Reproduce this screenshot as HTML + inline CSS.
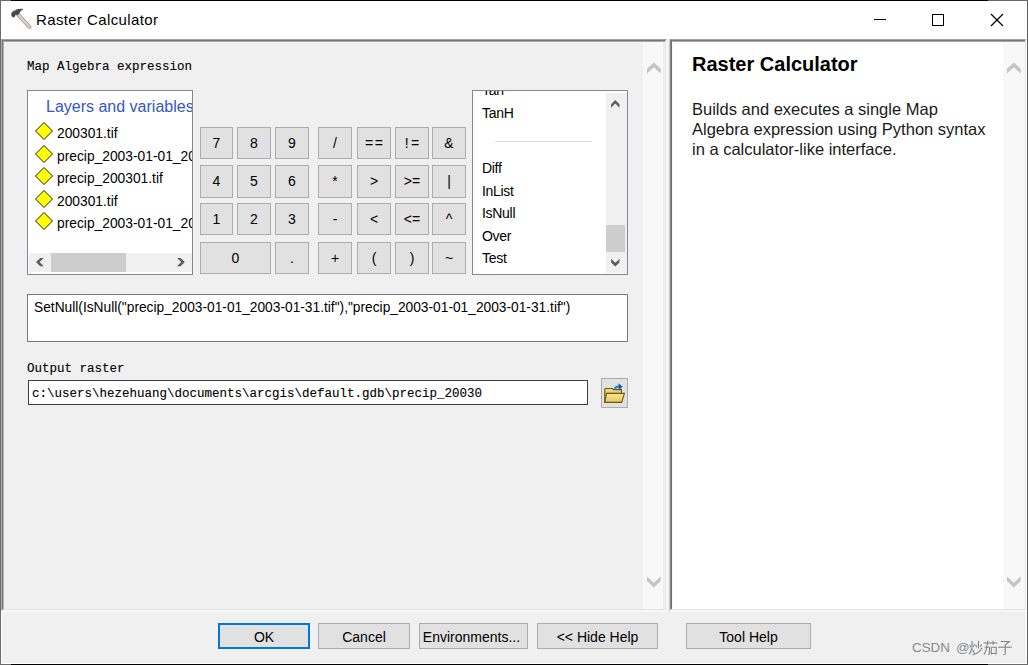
<!DOCTYPE html>
<html><head><meta charset="utf-8">
<style>
*{box-sizing:border-box;margin:0;padding:0}
html,body{width:1028px;height:665px;overflow:hidden;background:#f0f0f0;position:relative;font-family:"Liberation Sans",sans-serif}
.a{position:absolute}
.t{position:absolute;white-space:pre;line-height:1}
.btn{position:absolute;background:#e1e1e1;border:1px solid #adadad}
.cb{position:absolute;background:#e1e1e1;border:1px solid #adadad;font-size:14px;color:#000;text-align:center;line-height:30px}
.mono{font-family:"Liberation Mono",monospace;-webkit-text-stroke:0.12px #000}
.li{position:absolute;left:0;font-size:13.5px;color:#000;white-space:pre;line-height:16px}
</style></head><body>
<!-- window frame -->
<div class="a" style="left:0;top:0;width:1px;height:665px;background:#6b6b6b"></div>
<div class="a" style="left:1027px;top:0;width:1px;height:665px;background:#5e5e5e"></div>
<div class="a" style="left:0;top:0;width:1028px;height:1px;background:#6b6b6b"></div>
<div class="a" style="left:11px;top:0;width:977px;height:1px;background:#000"></div>
<div class="a" style="left:0;top:664px;width:1028px;height:1px;background:#6b6b6b"></div>
<div class="a" style="left:11px;top:664px;width:977px;height:1px;background:#000"></div>
<!-- title bar -->
<div class="a" style="left:1px;top:1px;width:1026px;height:38px;background:#fff"></div>
<svg class="a" style="left:0;top:0" width="40" height="36" viewBox="0 0 40 36">
  <path d="M18.6 12.8 L30.6 25.8 Q31.6 27.4 30.5 28.3 Q29.4 29 28.3 28 L16.4 15 Z" fill="#d6cfbc" stroke="#958d7c" stroke-width="0.85"/>
  <path d="M11.2 14.2 Q11.2 12.2 13 11 L16.5 9.4 Q19.5 8.6 23.6 9 Q21.5 10 20.2 11.6 L19.6 13.2 L17.4 15.2 L15.8 14.4 Q15 16.2 14 17.4 Q11.6 17.6 11.2 14.2 Z" fill="#474747"/>
  <path d="M12.5 12.4 Q14 10.8 16.5 10" stroke="#9a9a9a" stroke-width="0.8" fill="none"/>
</svg>
<div class="t" style="left:36px;top:12px;font-size:15px;letter-spacing:0.38px;color:#000">Raster Calculator</div>
<!-- window controls -->
<div class="a" style="left:874px;top:19px;width:12px;height:1px;background:#000"></div>
<div class="a" style="left:932px;top:14px;width:12px;height:12px;border:1px solid #000"></div>
<svg class="a" style="left:990px;top:13px" width="14" height="14" viewBox="0 0 14 14"><path d="M1 1 L13 13 M13 1 L1 13" stroke="#000" stroke-width="1.2"/></svg>

<!-- left panel -->
<div class="a" style="left:1px;top:39px;width:666px;height:573px;background:#f0f0f0;border-top:1px solid #a0a0a0;border-left:1px solid #ababab;border-right:1px solid #fff;border-bottom:2px solid #f7f7f7"></div>
<div class="a" style="left:2px;top:40px;width:664px;height:570px;border-top:1px solid #777;border-left:1px solid #787878;border-right:1px solid #e3e3e3;border-bottom:1px solid #e3e3e3"></div>
<div class="a" style="left:3px;top:41px;width:662px;height:568px;border-top:1px solid #a8a8a8;border-left:1px solid #b0b0b0"></div>
<div class="a" style="left:4px;top:42px;width:660px;height:567px;border-top:1px solid #f4f4f4;border-left:1px solid #f5f5f5"></div>
<div class="a" style="left:643px;top:42px;width:21px;height:567px;background:#f8f8f8;border-right:1px solid #ededed"></div>
<svg class="a" style="left:644px;top:58px" width="20" height="20" viewBox="0 0 20 20"><path d="M3 10.8 L9.9 4.5 L16.7 10.8 L16.7 15.4 L9.9 9.3 L3 15.4 Z" fill="#c4c4c4"/></svg>
<svg class="a" style="left:644px;top:570px" width="20" height="20" viewBox="0 0 20 20"><path d="M3 6.6 L9.9 12.7 L16.7 6.6 L16.7 11.1 L9.9 17.4 L3 11.1 Z" fill="#c4c4c4"/></svg>

<!-- right panel -->
<div class="a" style="left:669px;top:39px;width:358px;height:573px;background:#fff;border-top:1px solid #fff;border-left:1px solid #c8c8c8;border-right:1px solid #fff;border-bottom:2px solid #f7f7f7"></div>
<div class="a" style="left:670px;top:39px;width:356px;height:571px;border-top:1px solid #a0a0a0;border-left:1px solid #8a8a8a;border-right:1px solid #e3e3e3;border-bottom:1px solid #e3e3e3"></div>
<div class="a" style="left:671px;top:40px;width:354px;height:569px;border-top:1px solid #777;border-left:1px solid #696969"></div>
<div class="a" style="left:672px;top:41px;width:353px;height:568px;border-top:1px solid #a8a8a8;border-left:1px solid #f5f5f5"></div>
<div class="a" style="left:1003px;top:42px;width:22px;height:567px;background:#f8f8f8"></div>
<svg class="a" style="left:1004px;top:58px" width="20" height="20" viewBox="0 0 20 20"><path d="M3 10.8 L9.9 4.5 L16.7 10.8 L16.7 15.4 L9.9 9.3 L3 15.4 Z" fill="#c4c4c4"/></svg>
<svg class="a" style="left:1004px;top:570px" width="20" height="20" viewBox="0 0 20 20"><path d="M3 6.6 L9.9 12.7 L16.7 6.6 L16.7 11.1 L9.9 17.4 L3 11.1 Z" fill="#c4c4c4"/></svg>


<!-- LEFT CONTENT -->
<div class="t mono" style="left:27px;top:61px;font-size:12.5px;color:#000">Map Algebra expression</div>
<!-- layers listbox -->
<div class="a" style="left:27px;top:90px;width:166px;height:185px;background:#fff;border:1px solid #828790;overflow:hidden">
  <div class="t" style="left:18px;top:8px;font-size:16px;color:#3556c8">Layers and variables</div>
  <svg class="a" style="left:6px;top:30px" width="20" height="20" viewBox="0 0 20 20"><path d="M10 1.5 L18.5 10 L10 18.5 L1.5 10 Z" fill="#ffff00" stroke="#202020" stroke-width="1"/></svg>
  <div class="t" style="left:29px;top:36px;font-size:13.8px;color:#000">200301.tif</div>
  <svg class="a" style="left:6px;top:53px" width="20" height="20" viewBox="0 0 20 20"><path d="M10 1.5 L18.5 10 L10 18.5 L1.5 10 Z" fill="#ffff00" stroke="#202020" stroke-width="1"/></svg>
  <div class="t" style="left:29px;top:59px;font-size:13.8px;color:#000">precip_2003-01-01_2003-01-31.tif</div>
  <svg class="a" style="left:6px;top:75px" width="20" height="20" viewBox="0 0 20 20"><path d="M10 1.5 L18.5 10 L10 18.5 L1.5 10 Z" fill="#ffff00" stroke="#202020" stroke-width="1"/></svg>
  <div class="t" style="left:29px;top:81px;font-size:13.8px;color:#000">precip_200301.tif</div>
  <svg class="a" style="left:6px;top:98px" width="20" height="20" viewBox="0 0 20 20"><path d="M10 1.5 L18.5 10 L10 18.5 L1.5 10 Z" fill="#ffff00" stroke="#202020" stroke-width="1"/></svg>
  <div class="t" style="left:29px;top:104px;font-size:13.8px;color:#000">200301.tif</div>
  <svg class="a" style="left:6px;top:120px" width="20" height="20" viewBox="0 0 20 20"><path d="M10 1.5 L18.5 10 L10 18.5 L1.5 10 Z" fill="#ffff00" stroke="#202020" stroke-width="1"/></svg>
  <div class="t" style="left:29px;top:126px;font-size:13.8px;color:#000">precip_2003-01-01_2003-01-31.tif</div>
  <!-- h scrollbar -->
  <div class="a" style="left:1px;top:162px;width:163px;height:19px;background:#f0f0f0"></div>
  <div class="a" style="left:23px;top:162px;width:75px;height:19px;background:#cdcdcd"></div>
  <svg class="a" style="left:2px;top:161px" width="24" height="20" viewBox="0 0 24 20"><path d="M6 10.1 L10.2 5.9 L13.8 5.9 L9.6 10.1 L13.8 14.3 L10.2 14.3 Z" fill="#5c5c5c"/></svg>
  <svg class="a" style="left:138px;top:161px" width="28" height="20" viewBox="0 0 28 20"><path d="M11 5.9 L14.6 5.9 L18.8 10.1 L14.6 14.3 L11 14.3 L15.2 10.1 Z" fill="#5c5c5c"/></svg>
</div>


<!-- calc buttons -->
<div class="cb" style="left:200px;top:127px;width:33px;height:32px">7</div>
<div class="cb" style="left:237px;top:127px;width:34px;height:32px">8</div>
<div class="cb" style="left:275px;top:127px;width:34px;height:32px">9</div>
<div class="cb" style="left:318px;top:127px;width:34px;height:32px">/</div>
<div class="cb" style="left:357px;top:127px;width:34px;height:32px;letter-spacing:1.5px;text-indent:1.5px">==</div>
<div class="cb" style="left:395px;top:127px;width:34px;height:32px;letter-spacing:2.5px;text-indent:2.5px">!=</div>
<div class="cb" style="left:432px;top:127px;width:34px;height:32px">&amp;</div>
<div class="cb" style="left:200px;top:165px;width:33px;height:33px;line-height:31px">4</div>
<div class="cb" style="left:237px;top:165px;width:34px;height:33px;line-height:31px">5</div>
<div class="cb" style="left:275px;top:165px;width:34px;height:33px;line-height:31px">6</div>
<div class="cb" style="left:318px;top:165px;width:34px;height:33px;line-height:31px">*</div>
<div class="cb" style="left:357px;top:165px;width:34px;height:33px;line-height:31px">&gt;</div>
<div class="cb" style="left:395px;top:165px;width:34px;height:33px;line-height:31px">&gt;=</div>
<div class="cb" style="left:432px;top:165px;width:34px;height:33px;line-height:31px">|</div>
<div class="cb" style="left:200px;top:203px;width:33px;height:32px">1</div>
<div class="cb" style="left:237px;top:203px;width:34px;height:32px">2</div>
<div class="cb" style="left:275px;top:203px;width:34px;height:32px">3</div>
<div class="cb" style="left:318px;top:203px;width:34px;height:32px">-</div>
<div class="cb" style="left:357px;top:203px;width:34px;height:32px">&lt;</div>
<div class="cb" style="left:395px;top:203px;width:34px;height:32px">&lt;=</div>
<div class="cb" style="left:432px;top:203px;width:34px;height:32px">^</div>
<div class="cb" style="left:200px;top:242px;width:71px;height:32px">0</div>
<div class="cb" style="left:275px;top:242px;width:34px;height:32px">.</div>
<div class="cb" style="left:318px;top:242px;width:34px;height:32px">+</div>
<div class="cb" style="left:357px;top:242px;width:34px;height:32px">(</div>
<div class="cb" style="left:395px;top:242px;width:34px;height:32px">)</div>
<div class="cb" style="left:432px;top:242px;width:34px;height:32px">~</div>


<!-- functions listbox -->
<div class="a" style="left:472px;top:90px;width:156px;height:185px;background:#fff;border:1px solid #828790;overflow:hidden">
  <div class="t" style="left:9px;top:-8px;font-size:14px;letter-spacing:-0.3px;color:#000">Tan</div>
  <div class="t" style="left:9px;top:15px;font-size:14px;letter-spacing:-0.3px;color:#000">TanH</div>
  <div class="a" style="left:22px;top:50px;width:97px;height:1px;background:#d4dce8"></div>
  <div class="t" style="left:9px;top:70px;font-size:14px;letter-spacing:-0.3px;color:#000">Diff</div>
  <div class="t" style="left:9px;top:93px;font-size:14px;letter-spacing:-0.3px;color:#000">InList</div>
  <div class="t" style="left:9px;top:115px;font-size:14px;letter-spacing:-0.3px;color:#000">IsNull</div>
  <div class="t" style="left:9px;top:138px;font-size:14px;letter-spacing:-0.3px;color:#000">Over</div>
  <div class="t" style="left:9px;top:160px;font-size:14px;letter-spacing:-0.3px;color:#000">Test</div>
  <div class="a" style="left:133px;top:2px;width:21px;height:180px;background:#f0f0f0"></div>
  <div class="a" style="left:133px;top:134px;width:19px;height:27px;background:#cdcdcd"></div>
  <svg class="a" style="left:131px;top:3px" width="24" height="20" viewBox="0 0 24 20"><path d="M7.1 10.2 L11.3 5.9 L15.5 10.2 L15.5 13.8 L11.3 9.6 L7.1 13.8 Z" fill="#5c5c5c"/></svg>
  <svg class="a" style="left:131px;top:161px" width="24" height="20" viewBox="0 0 24 20"><path d="M7.1 7.1 L11.3 10.8 L15.5 7.1 L15.5 10.5 L11.3 14.4 L7.1 10.5 Z" fill="#5c5c5c"/></svg>
</div>
<!-- expression box -->
<div class="a" style="left:27px;top:294px;width:601px;height:48px;background:#fff;border:1px solid #7a7a7a"></div>
<div class="t" style="left:34px;top:301px;font-size:13.75px;color:#000">SetNull(IsNull("precip_2003-01-01_2003-01-31.tif"),"precip_2003-01-01_2003-01-31.tif")</div>
<!-- output raster -->
<div class="t mono" style="left:27px;top:363px;font-size:12.5px;color:#000">Output raster</div>
<div class="a" style="left:28px;top:380px;width:560px;height:25px;background:#fff;border:1px solid #3c3c3c"></div>
<div class="t mono" style="left:32px;top:388px;font-size:12.5px;color:#000">c:\users\hezehuang\documents\arcgis\default.gdb\precip_20030</div>
<div class="btn" style="left:601px;top:378px;width:27px;height:30px"></div>


<!-- folder icon -->
<svg class="a" style="left:603px;top:382px" width="24" height="22" viewBox="0 0 24 22">
  <defs>
    <linearGradient id="fg1" x1="0" y1="0" x2="0" y2="1"><stop offset="0" stop-color="#f4df86"/><stop offset="1" stop-color="#cfa938"/></linearGradient>
    <linearGradient id="fg2" x1="0" y1="0" x2="0" y2="1"><stop offset="0" stop-color="#f8e59a"/><stop offset="1" stop-color="#e9c85a"/></linearGradient>
  </defs>
  <path d="M1.8 20.4 L1.8 7.2 Q1.8 6.5 2.6 6.5 L9.4 6.5 L10.4 7.6 L18.4 7.6 L18.4 20.4 Z" fill="url(#fg1)" stroke="#6e5410" stroke-width="1.1"/>
  <path d="M3.6 11.4 L21.4 11.4 L18.6 20.4 L1.8 20.4 Z" fill="url(#fg2)" stroke="#6e5410" stroke-width="1.1"/>
  <path d="M11.6 7.6 Q12.3 4.4 16 4.6" fill="none" stroke="#2f80d0" stroke-width="2.3"/>
  <path d="M15.6 1.2 L19.6 4.8 L15.6 8.2 Z" fill="#145aa8"/>
</svg>
<!-- help text -->
<div class="t" style="left:692px;top:53px;font-size:20px;font-weight:bold;transform:scaleY(1.05);transform-origin:0 0;color:#000">Raster Calculator</div>
<div class="t" style="left:692px;top:99px;font-size:16.5px;color:#1a1a1a;line-height:20px">Builds and executes a single Map
Algebra expression using Python syntax
in a calculator-like interface.</div>
<!-- bottom buttons -->
<div class="a" style="left:218px;top:623px;width:92px;height:26px;background:#e1e1e1;border:2px solid #0078d7"></div>
<div class="t" style="left:218px;top:630px;width:92px;text-align:center;font-size:14px;color:#000">OK</div>
<div class="btn" style="left:318px;top:623px;width:92px;height:26px"></div>
<div class="t" style="left:318px;top:630px;width:92px;text-align:center;font-size:14px;color:#000">Cancel</div>
<div class="btn" style="left:419px;top:623px;width:109px;height:26px"></div>
<div class="t" style="left:417px;top:630px;width:109px;text-align:center;font-size:14px;color:#000">Environments...</div>
<div class="btn" style="left:537px;top:623px;width:121px;height:26px"></div>
<div class="t" style="left:537px;top:630px;width:121px;text-align:center;font-size:14px;color:#000">&lt;&lt; Hide Help</div>
<div class="btn" style="left:686px;top:623px;width:125px;height:26px"></div>
<div class="t" style="left:686px;top:630px;width:125px;text-align:center;font-size:14px;color:#000">Tool Help</div>
<!-- watermark -->
<div class="t" style="left:912px;top:641px;font-size:13.4px;color:#8a8a8a">CSDN</div><div class="t" style="left:956px;top:641px;font-size:13.4px;color:#8a8a8a">@</div>
<svg class="a" style="left:955px;top:636px" width="60" height="24" viewBox="0 0 1028 411"><g fill="none" stroke="#858585" stroke-width="19" stroke-linecap="butt">
<path d="M255 150 L268 195"/><path d="M335 140 L315 185"/><path d="M292 85 L292 200 Q280 270 240 315"/><path d="M300 230 L335 300"/>
<path d="M402 80 L402 215"/><path d="M355 150 L372 195"/><path d="M455 140 L435 185"/><path d="M465 200 Q420 290 300 322"/>
<path d="M488 120 L722 120"/><path d="M560 82 L560 150"/><path d="M652 82 L652 150"/>
<path d="M508 192 L592 192 L588 312 L570 318"/><path d="M548 150 Q540 260 495 318"/><path d="M622 192 L622 315 M622 192 L705 192 L705 315 M622 300 L705 300"/>
<path d="M785 95 L930 95 L862 150"/><path d="M862 150 L862 305 Q860 322 828 322"/><path d="M740 192 L975 192"/>
</g></svg>

<!-- bottom bar bevel -->
<div class="a" style="left:1px;top:611px;width:1px;height:53px;background:#fff"></div>
<div class="a" style="left:1px;top:663px;width:1026px;height:1px;background:#fff"></div>
<div class="a" style="left:1026px;top:611px;width:1px;height:53px;background:#fff"></div>

</body></html>
